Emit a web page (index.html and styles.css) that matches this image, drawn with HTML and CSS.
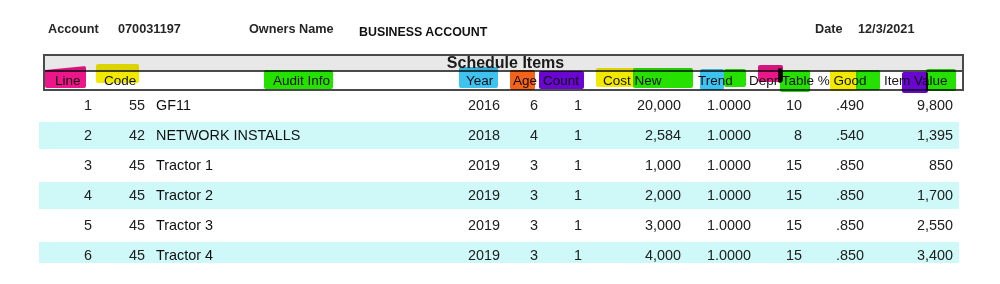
FILE: index.html
```html
<!DOCTYPE html>
<html>
<head>
<meta charset="utf-8">
<link rel="stylesheet" href="styles.css">
</head>
<body>
<div class="page">
  <div class="info">
    <span class="lbl">Account</span>
    <span class="val">070031197</span>
    <span class="lbl">Owners Name</span>
    <span class="val owner">BUSINESS ACCOUNT</span>
    <span class="lbl">Date</span>
    <span class="val">12/3/2021</span>
  </div>

  <div class="sched">
    <div class="sched-title">Schedule Items</div>
    <div class="sched-cols">
      <span>Line</span>
      <span>Code</span>
      <span>Audit Info</span>
      <span>Year</span>
      <span>Age</span>
      <span>Count</span>
      <span>Cost New</span>
      <span>Trend</span>
      <span>Depr Table % Good</span>
      <span>Item Value</span>
    </div>
  </div>

  <div class="rows">
    <div class="row"><span>1</span><span>55</span><span class="desc">GF11</span><span>2016</span><span>6</span><span>1</span><span>20,000</span><span>1.0000</span><span>10</span><span>.490</span><span>9,800</span></div>
    <div class="row alt"><span>2</span><span>42</span><span class="desc">NETWORK INSTALLS</span><span>2018</span><span>4</span><span>1</span><span>2,584</span><span>1.0000</span><span>8</span><span>.540</span><span>1,395</span></div>
    <div class="row"><span>3</span><span>45</span><span class="desc">Tractor 1</span><span>2019</span><span>3</span><span>1</span><span>1,000</span><span>1.0000</span><span>15</span><span>.850</span><span>850</span></div>
    <div class="row alt"><span>4</span><span>45</span><span class="desc">Tractor 2</span><span>2019</span><span>3</span><span>1</span><span>2,000</span><span>1.0000</span><span>15</span><span>.850</span><span>1,700</span></div>
    <div class="row"><span>5</span><span>45</span><span class="desc">Tractor 3</span><span>2019</span><span>3</span><span>1</span><span>3,000</span><span>1.0000</span><span>15</span><span>.850</span><span>2,550</span></div>
    <div class="row alt"><span>6</span><span>45</span><span class="desc">Tractor 4</span><span>2019</span><span>3</span><span>1</span><span>4,000</span><span>1.0000</span><span>15</span><span>.850</span><span>3,400</span></div>
  </div>

  <div class="marks" aria-hidden="true">
    <i class="mk pink slant" style="left:45px;top:66px;width:41px;height:22px"></i>
    <i class="mk yellow" style="left:96px;top:64px;width:43px;height:19px"></i>
    <i class="mk green" style="left:264px;top:70px;width:69px;height:19px"></i>
    <i class="mk blue" style="left:459px;top:67px;width:39px;height:21px"></i>
    <i class="mk orange" style="left:510px;top:70px;width:25px;height:20px"></i>
    <i class="mk purple" style="left:539px;top:71px;width:45px;height:18px"></i>
    <i class="mk yellow" style="left:596px;top:68px;width:39px;height:19px"></i>
    <i class="mk green" style="left:633px;top:68px;width:60px;height:20px"></i>
    <i class="mk blue" style="left:700px;top:69px;width:24px;height:21px"></i>
    <i class="mk green" style="left:724px;top:69px;width:22px;height:18px"></i>
    <i class="mk pink" style="left:758px;top:65px;width:25px;height:17px"></i>
    <i class="mk green" style="left:780px;top:70px;width:30px;height:22px"></i>
    <i class="mk black" style="left:778px;top:68px;width:4px;height:15px"></i>
    <i class="mk yellow" style="left:830px;top:70px;width:28px;height:21px"></i>
    <i class="mk green" style="left:856px;top:70px;width:24px;height:20px"></i>
    <i class="mk purple" style="left:902px;top:72px;width:26px;height:21px"></i>
    <i class="mk green" style="left:926px;top:69px;width:30px;height:22px"></i>
  </div>
</div>
</body>
</html>
```

FILE: styles.css
```css
html, body {
  margin: 0;
  padding: 0;
  background: #ffffff;
}

body {
  width: 1000px;
  height: 284px;
  overflow: hidden;
  font-family: "Liberation Sans", Arial, sans-serif;
  color: #1c1c1c;
}

.page {
  position: relative;
  width: 1000px;
  height: 284px;
}

/* top info line */
.info {
  display: grid;
  grid-template-columns: 70px 131px 110px 456px 43px auto;
  padding: 20px 0 0 48px;
  height: 18px;
  line-height: 18px;
  font-size: 12.7px;
  font-weight: bold;
  color: #262626;
}

.info .owner {
  font-size: 12.4px;
  padding-top: 3px;
  color: #111;
}

/* schedule header box */
.sched {
  margin: 16px 0 0 43px;
  width: 917px;
  border: 2px solid #4a4a4a;
}

.sched-title {
  height: 14px;
  line-height: 14px;
  background: #e8e8e8;
  border-bottom: 2px solid #4a4a4a;
  text-align: center;
  font-size: 16px;
  font-weight: bold;
  color: #1a1a1a;
  padding-left: 4px;
}

.sched-cols {
  display: grid;
  grid-template-columns: 49px 169px 193px 47px 30px 60px 95px 51px 135px auto;
  height: 16px;
  padding: 1px 0 0 10px;
  line-height: 16px;
  font-size: 13.5px;
  color: #151515;
  white-space: nowrap;
}

/* data rows */
.rows {
  margin: 1px 0 0 39px;
  width: 920px;
  height: 171px;
  overflow: hidden;
  display: flex;
  flex-direction: column;
  gap: 3px;
}

.row {
  flex: none;
  display: grid;
  grid-template-columns: 53px 53px 315px 40px 38px 44px 99px 70px 51px 62px 89px;
  padding-right: 6px;
  height: 27px;
  line-height: 27px;
  font-size: 14.4px;
  color: #202020;
  text-align: right;
  white-space: nowrap;
}

.row.alt {
  background: #cff8f8;
}

.row .desc {
  text-align: left;
  padding-left: 11px;
  color: #101010;
}

/* highlighter annotations drawn over the header */
.marks {
  position: absolute;
  inset: 0;
  pointer-events: none;
}

.mk {
  position: absolute;
  display: block;
  mix-blend-mode: multiply;
  border-radius: 2px;
}

.pink { background: #ea168a; }
.yellow { background: #f1e900; }
.green { background: #26e100; }
.blue { background: #40c2ef; }
.orange { background: #f2641c; }
.purple { background: #6a06cf; }
.black { background: #1a1a1a; }

.slant {
  clip-path: polygon(0 18%, 100% 0, 100% 100%, 0 100%);
}
```
